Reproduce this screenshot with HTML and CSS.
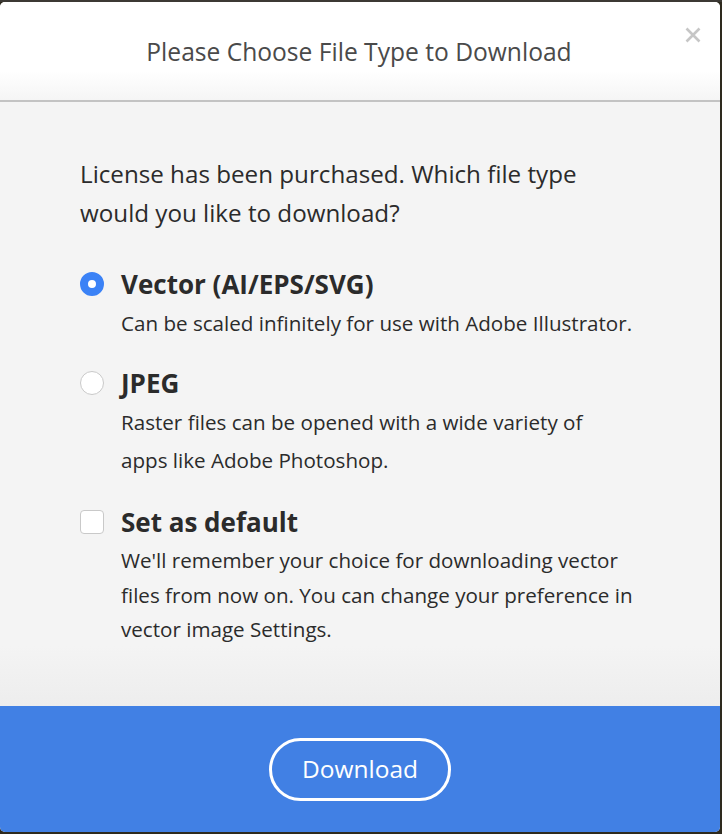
FILE: index.html
```html
<!DOCTYPE html>
<html lang="en">
<head>
<meta charset="utf-8">
<title>Please Choose File Type to Download</title>
<link rel="stylesheet" href="styles.css">
</head>
<body>
<div class="backdrop">
  <div class="modal">
    <header class="modal-header">
      <h1 class="modal-title">Please Choose File Type to Download</h1>
      <button class="close" aria-label="Close">
        <svg width="16" height="16" viewBox="0 0 16 16"><path d="M1.5 1.5 L14.5 14.5 M14.5 1.5 L1.5 14.5" stroke="#c6c6c6" stroke-width="2.6" stroke-linecap="butt"/></svg>
      </button>
    </header>
    <main class="modal-body">
      <p class="intro">License has been purchased. Which file type would you like to download?</p>
      <div class="option option-vector">
        <span class="radio radio-on"></span>
        <div class="option-text">
          <div class="option-title">Vector (AI/EPS/SVG)</div>
          <div class="option-desc">Can be scaled infinitely for use with Adobe Illustrator.</div>
        </div>
      </div>
      <div class="option option-jpeg">
        <span class="radio"></span>
        <div class="option-text">
          <div class="option-title">JPEG</div>
          <div class="option-desc">Raster files can be opened with a wide variety of<br>apps like Adobe Photoshop.</div>
        </div>
      </div>
      <div class="option option-default">
        <span class="checkbox"></span>
        <div class="option-text">
          <div class="option-title">Set as default</div>
          <div class="option-desc desc-tight">We'll remember your choice for downloading vector files from now on. You can change your preference in vector image Settings.</div>
        </div>
      </div>
    </main>
    <footer class="modal-footer">
      <button class="download">Download</button>
    </footer>
  </div>
</div>
</body>
</html>
```

FILE: styles.css
```css
* { box-sizing: border-box; }
html, body { margin: 0; padding: 0; }
body {
  background: #2e2a1e;
  font-family: "Open Sans", "Noto Sans", sans-serif;
  width: 722px;
  height: 834px;
  overflow: hidden;
}
.backdrop {
  background: linear-gradient(#3c3934 0, #3c3934 2px, #2e2a1e 2px);
  height: 834px;
  padding-top: 2px;
}
.modal {
  width: 720px;
  height: 830px;
  border-radius: 5px;
  overflow: hidden;
  display: flex;
  flex-direction: column;
  background: #f4f4f4;
}
.modal-header {
  position: relative;
  height: 100px;
  flex: none;
  display: flex;
  align-items: center;
  justify-content: center;
  background: linear-gradient(#ffffff 0, #ffffff 70%, #f5f5f5 100%);
  border-bottom: 2px solid #c3c3c3;
}
.modal-title {
  margin: 0 0 0 -2px;
  padding-top: 2px;
  font-size: 24.6px;
  font-weight: 400;
  color: #4a4a4a;
  line-height: 32px;
}
.close {
  position: absolute;
  top: 25px;
  right: 19px;
  width: 16px;
  height: 16px;
  padding: 0;
  border: 0;
  background: none;
  display: block;
}
.close svg { display: block; }
.modal-body {
  flex: 1;
  padding: 52px 0 0 80px;
  background: linear-gradient(#f4f4f4 0, #f4f4f4 90%, #ededed 100%);
  color: #2b2b2b;
}
.intro {
  margin: 0 0 36px;
  width: 560px;
  font-size: 24.2px;
  line-height: 39px;
}
.option {
  display: flex;
  align-items: flex-start;
  gap: 17px;
}
.option-jpeg { margin-top: 25px; }
.option-default { margin-top: 27px; }
.radio, .checkbox {
  flex: none;
  width: 24px;
  height: 24px;
  margin-top: 4px;
  background: #fff;
  border: 1px solid #c9c9c9;
}
.radio { border-radius: 50%; }
.checkbox { border-radius: 4px; }
.radio-on {
  border: 8px solid #3b82f6;
  background: #fff;
}
.option-title {
  font-size: 26px;
  font-weight: 700;
  line-height: 32px;
  color: #2b2b2b;
}
.option-text { width: 525px; }
.option-desc {
  margin-top: 4px;
  font-size: 20.6px;
  line-height: 38px;
}
.desc-tight {
  margin-top: 5px;
  line-height: 34.5px;
}
.modal-footer {
  flex: none;
  height: 126px;
  background: #4180e4;
  display: flex;
  align-items: center;
  justify-content: center;
}
.download {
  width: 182px;
  height: 63px;
  border: 3px solid #ffffff;
  border-radius: 32px;
  background: transparent;
  color: #ffffff;
  font-family: "Open Sans", "Noto Sans", sans-serif;
  font-size: 24.5px;
  padding: 0 0 2px;
}
```
